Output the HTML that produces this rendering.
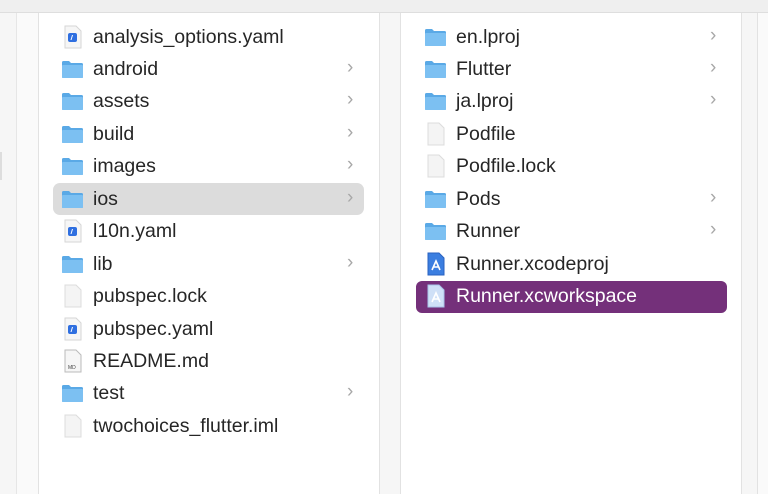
<!DOCTYPE html>
<html><head><style>
body{margin:0;width:768px;height:494px;overflow:hidden;background:#f6f6f6;font-family:"Liberation Sans",sans-serif;position:relative}
.top{position:absolute;left:0;top:0;width:768px;height:12px;background:#efefef;border-bottom:1px solid #dedede}
.col{position:absolute;top:13px;bottom:0;background:#fff;border-left:1px solid #e2e2e2;border-right:1px solid #e2e2e2}
.row{position:absolute;height:32px;line-height:32px;font-size:19.5px;color:#262626;white-space:nowrap}
.row .t{position:absolute;top:0}
.row svg{position:absolute}
.chev{position:absolute;top:-1px;color:#a8a8a8;font-size:19px}
</style></head><body>
<div class="top"></div>
<div class="col" style="left:16px;width:21px;background:#fafafa;border-left:1px solid #e6e6e6;border-right:1px solid #e2e2e2"></div>
<div style="position:absolute;left:0;top:152px;width:2px;height:28px;background:#ddd"></div>
<div class="col" style="left:38px;width:340px"></div>
<div class="col" style="left:400px;width:340px"></div>
<div class="col" style="left:757px;width:11px;background:#fafafa;border-right:none"></div>
<div style="position:absolute;left:53px;top:183px;width:311px;height:32px;background:#dcdcdc;border-radius:7px"></div>
<div style="position:absolute;left:416px;top:281px;width:311px;height:32px;background:#74307a;border-radius:6px"></div>
<div id="c"></div>
<script>
const F='<svg width="23" height="20" viewBox="0 0 23 20"><path d="M1 3.5Q1 2 2.5 2H8l2 2h10.5Q22 4 22 5.5V18Q22 19 21 19H2Q1 19 1 18Z" fill="#5aa9e6"/><path d="M1 7Q1 6 2 6h19q1 0 1 1v11q0 1-1 1H2q-1 0-1-1Z" fill="#7cc0f2"/></svg>';
const D='<svg width="23" height="24" viewBox="0 0 23 24"><path d="M4 1h11l5 5v17H4Z" fill="#f4f4f4" stroke="#dcdcdc"/></svg>';
const Y='<svg width="23" height="24" viewBox="0 0 23 24"><path d="M4 1h11l5 5v17H4Z" fill="#f6f6f6" stroke="#d6d6d6"/><rect x="7" y="8" width="9" height="9" rx="2" fill="#2f6fe0"/><path d="M11 10l1 0-1.5 5h-1z" fill="#fff"/></svg>';
const M='<svg width="23" height="24" viewBox="0 0 23 24"><path d="M4 1h11l5 5v17H4Z" fill="#f6f6f6" stroke="#bbb"/><text x="7" y="20" font-size="5" fill="#444" font-family="Liberation Sans">MD</text></svg>';
const X=(c,b)=>'<svg width="23" height="24" viewBox="0 0 23 24"><path d="M4 1h11l5 5v17H4Z" fill="'+c+'" stroke="'+b+'"/><path d="M8 18l4-9 4 9M9 15h6" stroke="#fff" stroke-width="1.6" fill="none"/></svg>';
const L=[["Y","analysis_options.yaml"],["F","android",1],["F","assets",1],["F","build",1],["F","images",1],["F","ios",1],["Y","l10n.yaml"],["F","lib",1],["D","pubspec.lock"],["Y","pubspec.yaml"],["M","README.md"],["F","test",1],["D","twochoices_flutter.iml"]];
const R=[["F","en.lproj",1],["F","Flutter",1],["F","ja.lproj",1],["D","Podfile"],["D","Podfile.lock"],["F","Pods",1],["F","Runner",1],["XP","Runner.xcodeproj"],["XW","Runner.xcworkspace"]];
const ic={F,D,Y,M,XP:X('#3b7ee0','#2a62c0'),XW:X('#cfe0f7','#a9c4ea')};
let h='';
function put(list,ix,tx,cx){list.forEach((r,i)=>{const top=20.5+i*32.45;const sel=r[1]=="Runner.xcworkspace";
const isF=r[0]=="F";h+='<div class="row" style="left:0;top:'+top+'px;width:768px"><span style="position:absolute;left:'+ix+'px;top:'+(isF?6:4)+'px">'+ic[r[0]]+'</span><span class="t" style="left:'+tx+'px;'+(sel?'color:#fff':'')+'">'+r[1]+'</span>'+(r[2]?'<span class="chev" style="left:'+cx+'px">&#x203A;</span>':'')+'</div>';});}
put(L,61,93,347);put(R,424,456,710);
document.getElementById('c').innerHTML=h;
</script>
</body></html>
